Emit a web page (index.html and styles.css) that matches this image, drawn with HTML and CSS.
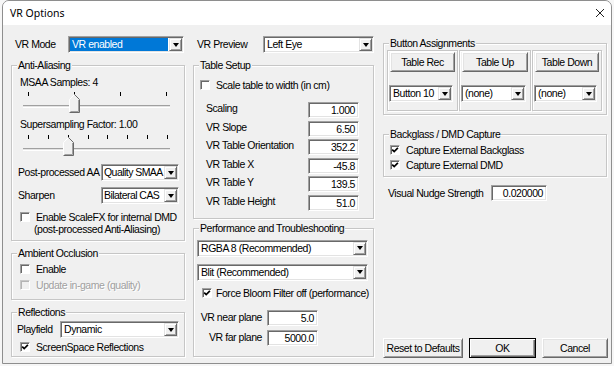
FILE: index.html
```html
<!DOCTYPE html>
<html lang="en">
<head>
  <meta charset="UTF-8" />
  <meta name="viewport" content="width=device-width, initial-scale=1" />
  <title>VR Options</title>
  <link rel="stylesheet" href="styles.css">
</head>
<body>
  <div class="window">
    <div class="titlebar">
      <span class="title">VR Options</span>
      <svg class="close" width="10" height="10" viewBox="0 0 10 10">
        <path d="M1 1L9 9M9 1L1 9" stroke="#222" stroke-width="1" fill="none" />
      </svg>
    </div>

    <div class="client">
      <!-- left column -->
      <div class="col col-left">
        <div class="field-row row-top">
          <span class="lbl lbl-vrmode">VR Mode</span>
          <div class="combo combo-vrmode"><span class="combo-text selected">VR enabled</span><span class="combo-btn"></span></div>
        </div>

        <fieldset class="group group-aa">
          <legend>Anti-Aliasing</legend>
          <div class="text-line line-msaa">MSAA Samples: 4</div>
          <svg class="slider slider-msaa" width="172" height="24" viewBox="0 0 172 24">
            <path d="M16.5 2v4M62.5 2v4M108.5 2v4M154.5 2v4" stroke="#000" />
            <path d="M11 15.5H158" stroke="#a0a0a0" />
            <path d="M11 16.5H158" stroke="#e3e3e3" />
            <path d="M11 17.5H158" stroke="#fff" />
            <path d="M57.5 22.5V9.5L62.5 4.5L67.5 9.5V22.5Z" fill="#f0f0f0" />
            <path d="M57.5 22.5V9.5L62.5 4.5" fill="none" stroke="#fff" />
            <path d="M62.5 4.5L67.5 9.5V22.5H57.5" fill="none" stroke="#696969" />
            <path d="M66.5 10V21.5H58.5" fill="none" stroke="#a0a0a0" />
          </svg>
          <div class="text-line line-ss">Supersampling Factor: 1.00</div>
          <svg class="slider slider-ss" width="172" height="24" viewBox="0 0 172 24">
            <path d="M16.5 2v4M36.5 2v4M56.5 2v4M76.5 2v4M95.5 2v4M115.5 2v4M135.5 2v4M155.5 2v4" stroke="#000" />
            <path d="M11 15.5H158" stroke="#a0a0a0" />
            <path d="M11 16.5H158" stroke="#e3e3e3" />
            <path d="M11 17.5H158" stroke="#fff" />
            <path d="M51.5 22.5V9.5L56.5 4.5L61.5 9.5V22.5Z" fill="#f0f0f0" />
            <path d="M51.5 22.5V9.5L56.5 4.5" fill="none" stroke="#fff" />
            <path d="M56.5 4.5L61.5 9.5V22.5H51.5" fill="none" stroke="#696969" />
            <path d="M60.5 10V21.5H52.5" fill="none" stroke="#a0a0a0" />
          </svg>
          <div class="field-row row-ppaa">
            <span class="lbl lbl-ppaa">Post-processed AA</span>
            <div class="combo combo-aa"><span class="combo-text">Quality SMAA</span><span class="combo-btn"></span></div>
          </div>
          <div class="field-row row-sharpen">
            <span class="lbl lbl-ppaa">Sharpen</span>
            <div class="combo combo-aa"><span class="combo-text">Bilateral CAS</span><span class="combo-btn"></span></div>
          </div>
          <div class="check check-scalefx">
            <span class="cb"></span>
            <span>Enable ScaleFX for internal DMD<br><span class="second-line">(post-processed Anti-Aliasing)</span></span>
          </div>
        </fieldset>

        <fieldset class="group group-ao">
          <legend>Ambient Occlusion</legend>
          <div class="check check-ao"><span class="cb"></span>Enable</div>
          <div class="check check-ao2 disabled"><span class="cb cb-disabled"></span>Update in-game (quality)</div>
        </fieldset>

        <fieldset class="group group-refl">
          <legend>Reflections</legend>
          <div class="field-row row-playfield">
            <span class="lbl lbl-playfield">Playfield</span>
            <div class="combo combo-playfield"><span class="combo-text">Dynamic</span><span class="combo-btn"></span></div>
          </div>
          <div class="check check-ssr">
            <span class="cb"><svg width="8" height="8" viewBox="0 0 8 8"><path d="M1.2 3.6L3.2 5.6L6.9 1.9" fill="none" stroke="#000" stroke-width="1.7" /></svg></span>ScreenSpace Reflections
          </div>
        </fieldset>
      </div>

      <!-- middle column -->
      <div class="col col-mid">
        <div class="field-row row-top">
          <span class="lbl lbl-preview">VR Preview</span>
          <div class="combo combo-preview"><span class="combo-text">Left Eye</span><span class="combo-btn"></span></div>
        </div>

        <fieldset class="group group-table">
          <legend>Table Setup</legend>
          <div class="check check-scale"><span class="cb"></span>Scale table to width (in cm)</div>
          <div class="num-row num-first"><span class="lbl lbl-num">Scaling</span><div class="edit edit-num">1.000</div></div>
          <div class="num-row"><span class="lbl lbl-num">VR Slope</span><div class="edit edit-num">6.50</div></div>
          <div class="num-row"><span class="lbl lbl-num">VR Table Orientation</span><div class="edit edit-num">352.2</div></div>
          <div class="num-row"><span class="lbl lbl-num">VR Table X</span><div class="edit edit-num">-45.8</div></div>
          <div class="num-row"><span class="lbl lbl-num">VR Table Y</span><div class="edit edit-num">139.5</div></div>
          <div class="num-row"><span class="lbl lbl-num">VR Table Height</span><div class="edit edit-num">51.0</div></div>
        </fieldset>

        <fieldset class="group group-perf">
          <legend>Performance and Troubleshooting</legend>
          <div class="combo combo-wide combo-rgba"><span class="combo-text">RGBA 8 (Recommended)</span><span class="combo-btn"></span></div>
          <div class="combo combo-wide combo-blit"><span class="combo-text">Blit (Recommended)</span><span class="combo-btn"></span></div>
          <div class="check check-bloom">
            <span class="cb"><svg width="8" height="8" viewBox="0 0 8 8"><path d="M1.2 3.6L3.2 5.6L6.9 1.9" fill="none" stroke="#000" stroke-width="1.7" /></svg></span>Force Bloom Filter off (performance)
          </div>
          <div class="field-row plane-row plane-near"><span class="lbl lbl-plane">VR near plane</span><div class="edit edit-num">5.0</div></div>
          <div class="field-row plane-row plane-far"><span class="lbl lbl-plane">VR far plane</span><div class="edit edit-num">5000.0</div></div>
        </fieldset>
      </div>

      <!-- right column -->
      <div class="col col-right">
        <fieldset class="group group-buttons">
          <legend>Button Assignments</legend>
          <div class="frames">
            <div class="frame frame-1">
              <div class="btn">Table Rec</div>
              <div class="combo combo-assign"><span class="combo-text">Button 10</span><span class="combo-btn"></span></div>
            </div>
            <div class="frame frame-2">
              <div class="btn">Table Up</div>
              <div class="combo combo-assign"><span class="combo-text">(none)</span><span class="combo-btn"></span></div>
            </div>
            <div class="frame frame-3">
              <div class="btn">Table Down</div>
              <div class="combo combo-assign"><span class="combo-text">(none)</span><span class="combo-btn"></span></div>
            </div>
          </div>
        </fieldset>

        <fieldset class="group group-capture">
          <legend>Backglass / DMD Capture</legend>
          <div class="check check-cap1">
            <span class="cb"><svg width="8" height="8" viewBox="0 0 8 8"><path d="M1.2 3.6L3.2 5.6L6.9 1.9" fill="none" stroke="#000" stroke-width="1.7" /></svg></span>Capture External Backglass
          </div>
          <div class="check check-cap2">
            <span class="cb"><svg width="8" height="8" viewBox="0 0 8 8"><path d="M1.2 3.6L3.2 5.6L6.9 1.9" fill="none" stroke="#000" stroke-width="1.7" /></svg></span>Capture External DMD
          </div>
        </fieldset>

        <div class="field-row row-nudge">
          <span class="lbl lbl-nudge">Visual Nudge Strength</span>
          <div class="edit edit-nudge">0.020000</div>
        </div>

        <div class="actions">
          <div class="btn btn-reset">Reset to Defaults</div>
          <div class="btn btn-ok">OK</div>
          <div class="btn btn-cancel">Cancel</div>
        </div>
      </div>
    </div>
  </div>
</body>
</html>
```

FILE: styles.css
```css
* {
  box-sizing: border-box;
}

body {
  margin: 0;
  background: #f6f6f6;
  font-family: "Liberation Sans", Arial, sans-serif;
  font-size: 10.5px;
  letter-spacing: -0.45px;
  line-height: 13px;
  color: #000;
}

.window {
  width: 610px;
  height: 364px;
  margin-left: 2px;
  border: 1px solid #8e8e8e;
  border-radius: 7px 7px 0 0;
  background: #f0f0f0;
  display: flex;
  flex-direction: column;
  overflow: hidden;
}

.titlebar {
  flex: none;
  height: 24px;
  background: #fff;
  display: flex;
  align-items: center;
  justify-content: space-between;
  padding: 0 6px 0 7px;
}

.title {
  font-family: "Noto Sans", sans-serif;
  font-size: 10.5px;
  letter-spacing: 0;
}

.close {
  display: block;
}

.client {
  flex: 1;
  min-height: 0;
  display: flex;
  padding: 11px 0 5px 8px;
}

.col {
  display: flex;
  flex-direction: column;
}

.col-left {
  width: 174px;
}

.col-mid {
  width: 181px;
  margin-left: 8px;
}

.col-right {
  width: 225px;
  margin-left: 9px;
}

/* group boxes */
.group {
  margin: 6px 0 0;
  padding: 0;
  min-width: 0;
  border: 1px solid #c6c6c6;
  box-shadow: inset 1px 1px #fff, 1px 1px #fff;
}

.group legend {
  margin-left: 5px;
  padding: 0 1px;
  line-height: 13px;
  white-space: nowrap;
  background: #f0f0f0;
}

/* controls */
.field-row {
  display: flex;
  align-items: center;
}

.lbl {
  flex: none;
  white-space: nowrap;
}

.combo {
  display: flex;
  height: 17px;
  padding: 1px;
  background: #fff;
  border: 1px solid;
  border-color: #a0a0a0 #fff #fff #a0a0a0;
  box-shadow: inset 1px 1px #696969, inset -1px -1px #e3e3e3;
}

.combo-text {
  flex: 1;
  min-width: 0;
  padding-left: 2px;
  line-height: 13px;
  white-space: nowrap;
  overflow: hidden;
}

.combo-text.selected {
  background: #0078d7;
  color: #fff;
  margin-right: 1px;
}

.combo-btn {
  flex: none;
  width: 13px;
  background: #f0f0f0;
  border: 1px solid;
  border-color: #e3e3e3 #696969 #696969 #e3e3e3;
  box-shadow: inset 1px 1px #fff, inset -1px -1px #a0a0a0;
  display: flex;
  align-items: center;
  justify-content: center;
}

.combo-btn::after {
  content: "";
  border-style: solid;
  border-width: 4px 3.5px 0;
  border-color: #000 transparent transparent;
}

.edit {
  height: 16px;
  padding: 0 3px;
  background: #fff;
  border: 1px solid;
  border-color: #a0a0a0 #fff #fff #a0a0a0;
  box-shadow: inset 1px 1px #696969, inset -1px -1px #e3e3e3;
  line-height: 14px;
  text-align: right;
  white-space: nowrap;
}

.btn {
  height: 20px;
  display: flex;
  align-items: center;
  justify-content: center;
  background: #f0f0f0;
  border: 1px solid;
  border-color: #fff #696969 #696969 #fff;
  box-shadow: inset 1px 1px #e3e3e3, inset -1px -1px #a0a0a0;
  white-space: nowrap;
}

.check {
  display: flex;
  align-items: center;
  line-height: 12px;
  padding-left: 8px;
  white-space: nowrap;
}

.cb {
  flex: none;
  width: 10px;
  height: 10px;
  margin-right: 6px;
  background: #fff;
  border: 1px solid;
  border-color: #a0a0a0 #fff #fff #a0a0a0;
  box-shadow: inset 1px 1px #696969;
  display: flex;
}

.cb svg {
  display: block;
  position: relative;
}

.cb-disabled {
  background: #f0f0f0;
  border-color: #c8c8c8 #fff #fff #c8c8c8;
  box-shadow: inset 1px 1px #b4b4b4;
}

.disabled {
  color: #a0a0a0;
  text-shadow: 1px 1px #fff;
}

.slider {
  display: block;
}

/* left column */
.row-top {
  padding-left: 4px;
}

.lbl-vrmode {
  width: 53px;
}

.combo-vrmode {
  width: 116px;
}

.text-line {
  padding-left: 8px;
}

.line-msaa {
  margin-top: 4px;
}

.slider-msaa {
  margin-top: 1px;
}

.line-ss {
  margin-top: 4px;
}

.slider-ss {
  margin-top: 2px;
}

.row-ppaa,
.row-sharpen {
  padding-left: 6px;
}

.row-ppaa {
  margin-top: 7px;
}

.row-sharpen {
  margin-top: 6px;
}

.lbl-ppaa {
  width: 83px;
}

.combo-aa {
  width: 78px;
}

.combo-aa .combo-text {
  padding-left: 1px;
  letter-spacing: -0.55px;
}

.check-scalefx {
  margin-top: 7px;
  align-items: flex-start;
}

.check-scalefx .cb {
  margin-top: 1px;
}

.second-line {
  margin-left: -2px;
}

.group-aa {
  padding-bottom: 5px;
}

.group-ao {
  padding-bottom: 8px;
}

.check-ao {
  margin-top: 3px;
}

.check-ao2 {
  margin-top: 4px;
}

.group-refl {
  padding-bottom: 3px;
}

.row-playfield {
  margin-top: 2px;
  padding-left: 5px;
}

.lbl-playfield {
  width: 43px;
}

.combo-playfield {
  width: 119px;
}

.check-ssr {
  margin-top: 3px;
}

/* middle column */
.lbl-preview {
  width: 66px;
}

.combo-preview {
  width: 111px;
}

.group-table {
  padding-bottom: 7px;
}

.check-scale {
  margin-top: 7px;
  padding-left: 6px;
}

.num-row {
  display: flex;
  align-items: flex-start;
  padding-left: 12px;
  margin-top: 2.5px;
  line-height: 12px;
}

.num-first {
  margin-top: 11px;
}

.lbl-num {
  width: 102px;
}

.edit-num {
  width: 51px;
}

.group-perf {
  margin-top: 3px;
  padding-bottom: 10px;
}

.combo-wide {
  width: 171px;
  margin-left: 3px;
}

.combo-rgba {
  margin-top: 5px;
}

.combo-blit {
  margin-top: 7px;
}

.check-bloom {
  margin-top: 6px;
}

.check-bloom .cb {
  margin-right: 4px;
}

.plane-near {
  margin-top: 11px;
}

.plane-far {
  margin-top: 4px;
}

.lbl-plane {
  width: 68px;
  margin-right: 5px;
  text-align: right;
}

/* right column */
.col-right .group {
  width: 224px;
}

.group-buttons {
  margin-top: 1px;
  padding-bottom: 3px;
}

.frames {
  display: flex;
  gap: 1px;
  padding-left: 3px;
}

.frame {
  height: 61px;
  padding: 1px 2px 0;
  border: 1px solid #c6c6c6;
  box-shadow: inset 1px 1px #fff, 1px 1px #fff;
}

.frame-1 {
  width: 71px;
}

.frame-2 {
  width: 72px;
}

.frame-3 {
  width: 70px;
}

.combo-assign {
  margin: 13px 2px 0 -1px;
}

.group-capture {
  margin-top: 13px;
  padding-bottom: 5px;
}

.group-capture .check {
  padding-left: 6px;
}

.check-cap1,
.check-cap2 {
  margin-top: 3px;
}

.row-nudge {
  margin-top: 8px;
  padding-left: 5px;
}

.lbl-nudge {
  width: 103px;
}

.edit-nudge {
  width: 56px;
}

.actions {
  margin-top: auto;
  display: flex;
  gap: 6px;
}

.btn-reset {
  width: 80px;
}

.btn-ok {
  width: 67px;
  border-color: #000;
  box-shadow: inset 1px 1px #fff, inset -1px -1px #696969, inset -2px -2px #a0a0a0;
}

.btn-cancel {
  width: 66px;
}
```
